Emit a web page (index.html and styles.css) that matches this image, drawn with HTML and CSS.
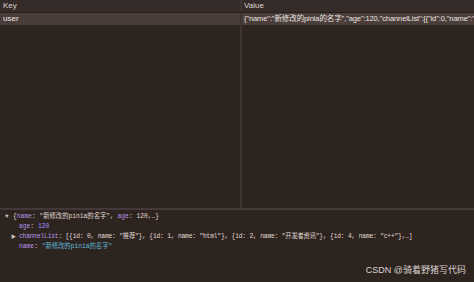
FILE: index.html
```html
<!DOCTYPE html>
<html lang="en">
<head>
    <meta charset="UTF-8">
    <title>Storage</title>
    <link rel="stylesheet" href="styles.css">
</head>
<body>
    <div class="storage">
        <div class="table">
            <div class="row head">
                <div class="cell key">Key</div>
                <div class="cell val">Value</div>
            </div>
            <div class="row selected">
                <div class="cell key">user</div>
                <div class="cell val">{"name":"新修改的pinia的名字","age":120,"channelList":[{"id":0,"name":"…</div>
            </div>
            <div class="row filler">
                <div class="cell key"></div>
                <div class="cell val"></div>
            </div>
        </div>
        <div class="preview">
            <div class="line">
                <span class="arrow">&#9660;</span><span class="punc">{</span><span class="prop">name</span><span class="punc">: </span><span class="str2">"新修改的pinia的名字"</span><span class="punc">, </span><span class="prop">age</span><span class="punc">: 120,…}</span>
            </div>
            <div class="line indent">
                <span class="prop">age</span><span class="punc">: </span><span class="num">120</span>
            </div>
            <div class="line indent2 tight">
                <span class="arrow small">&#9654;</span><span class="prop">channelList</span><span class="punc">: [{id: 0, name: "推荐"}, {id: 1, name: "html"}, {id: 2, name: "开发者资讯"}, {id: 4, name: "c++"},…]</span>
            </div>
            <div class="line indent">
                <span class="prop">name</span><span class="punc">: </span><span class="str">"新修改的pinia的名字"</span>
            </div>
            <div class="watermark">CSDN @骑着野猪写代码</div>
        </div>
    </div>
</body>
</html>
```
FILE: styles.css
```css
* {
    margin: 0;
    padding: 0;
    box-sizing: border-box;
}

body {
    background-color: #2d2420;
    width: 474px;
    height: 282px;
    overflow: hidden;
    font-family: "Liberation Sans", "Noto Sans CJK SC", sans-serif;
    color: #ddd6d2;
}

.storage {
    display: flex;
    flex-direction: column;
    height: 282px;
}

.table {
    height: 210px;
    display: flex;
    flex-direction: column;
    border-bottom: 2px solid #44383a;
}

.row {
    display: flex;
    font-size: 8px;
}

.cell {
    overflow: hidden;
    white-space: nowrap;
}

.cell.key {
    width: 242px;
    padding-left: 3px;
    border-right: 2px solid #3f3431;
}

.cell.val {
    flex: 1;
    padding-left: 2px;
}

.head {
    height: 13px;
    line-height: 12px;
    background-color: #352b28;
    border-bottom: 1px solid #261e1b;
}

.selected {
    height: 12px;
    line-height: 12px;
    background-color: #4a3d3a;
    color: #ece6e3;
}

.selected .val {
    font-size: 7.5px;
    letter-spacing: -0.1px;
}

.filler {
    flex: 1;
    background-color: #2e2521;
}

.preview {
    flex: 1;
    position: relative;
    padding-top: 2px;
    font-family: "Liberation Mono", "Noto Sans CJK SC", monospace;
    font-size: 6.3px;
    color: #d8d0cc;
}

.line {
    height: 10px;
    line-height: 10px;
    white-space: nowrap;
    padding-left: 5px;
}

.line.indent {
    padding-left: 19px;
}

.line.indent2 {
    padding-left: 11px;
}

.line.tight {
    letter-spacing: -0.2px;
}

.arrow {
    display: inline-block;
    font-size: 6px;
    width: 8px;
    color: #c8c0bc;
}

.arrow.small {
    font-size: 5px;
    width: 8px;
}

.prop {
    color: #b995e8;
}

.punc {
    color: #e0d9d5;
}

.num {
    color: #9b8cff;
}

.str {
    color: #62b7d9;
}

.str2 {
    color: #e0d9d5;
}

.watermark {
    position: absolute;
    right: 8px;
    bottom: 6px;
    font-family: "Liberation Sans", "Noto Sans CJK SC", sans-serif;
    font-size: 9px;
    color: #d9d2cf;
}
```
